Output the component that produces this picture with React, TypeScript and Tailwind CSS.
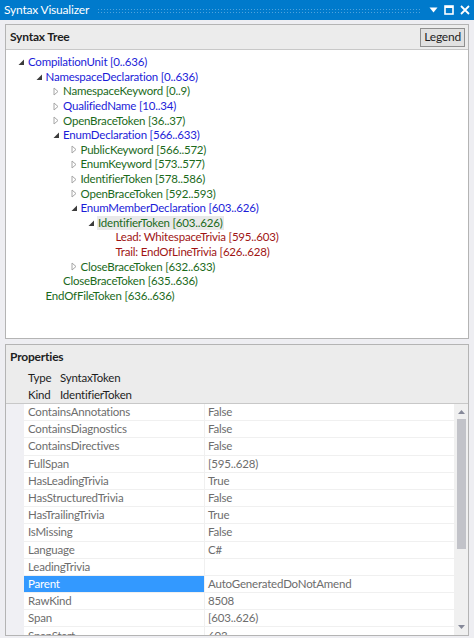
import React from 'react';

type Kind = 'node' | 'token' | 'trivia';
type Glyph = 'open' | 'closed' | 'none';

interface TreeItem {
  level: number;
  glyph: Glyph;
  text: string;
  kind: Kind;
  selected?: boolean;
}

const tree: TreeItem[] = [
  { level: 0, glyph: 'open', text: 'CompilationUnit [0..636)', kind: 'node' },
  { level: 1, glyph: 'open', text: 'NamespaceDeclaration [0..636)', kind: 'node' },
  { level: 2, glyph: 'closed', text: 'NamespaceKeyword [0..9)', kind: 'token' },
  { level: 2, glyph: 'closed', text: 'QualifiedName [10..34)', kind: 'node' },
  { level: 2, glyph: 'closed', text: 'OpenBraceToken [36..37)', kind: 'token' },
  { level: 2, glyph: 'open', text: 'EnumDeclaration [566..633)', kind: 'node' },
  { level: 3, glyph: 'closed', text: 'PublicKeyword [566..572)', kind: 'token' },
  { level: 3, glyph: 'closed', text: 'EnumKeyword [573..577)', kind: 'token' },
  { level: 3, glyph: 'closed', text: 'IdentifierToken [578..586)', kind: 'token' },
  { level: 3, glyph: 'closed', text: 'OpenBraceToken [592..593)', kind: 'token' },
  { level: 3, glyph: 'open', text: 'EnumMemberDeclaration [603..626)', kind: 'node' },
  { level: 4, glyph: 'open', text: 'IdentifierToken [603..626)', kind: 'token', selected: true },
  { level: 5, glyph: 'none', text: 'Lead: WhitespaceTrivia [595..603)', kind: 'trivia' },
  { level: 5, glyph: 'none', text: 'Trail: EndOfLineTrivia [626..628)', kind: 'trivia' },
  { level: 3, glyph: 'closed', text: 'CloseBraceToken [632..633)', kind: 'token' },
  { level: 2, glyph: 'none', text: 'CloseBraceToken [635..636)', kind: 'token' },
  { level: 1, glyph: 'none', text: 'EndOfFileToken [636..636)', kind: 'token' },
];

const indent = ['pl-[12px]', 'pl-[29.5px]', 'pl-[47px]', 'pl-[64.5px]', 'pl-[82px]', 'pl-[99.5px]'];

const kindColor: Record<Kind, string> = {
  node: 'text-[#1c1cd8]',
  token: 'text-[#1b6a1b]',
  trivia: 'text-[#a01414]',
};

const props: [string, string][] = [
  ['ContainsAnnotations', 'False'],
  ['ContainsDiagnostics', 'False'],
  ['ContainsDirectives', 'False'],
  ['FullSpan', '[595..628)'],
  ['HasLeadingTrivia', 'True'],
  ['HasStructuredTrivia', 'False'],
  ['HasTrailingTrivia', 'True'],
  ['IsMissing', 'False'],
  ['Language', 'C#'],
  ['LeadingTrivia', ''],
  ['Parent', 'AutoGeneratedDoNotAmend'],
  ['RawKind', '8508'],
  ['Span', '[603..626)'],
  ['SpanStart', '603'],
];

const Glyph: React.FC<{ glyph: Glyph }> = ({ glyph }) => {
  if (glyph === 'open') {
    return (
      <svg width="7" height="7" viewBox="0 0 7 7" className="mt-[1px]">
        <polygon points="6,0.5 6,6 0.5,6" fill="#3c3c3c" />
      </svg>
    );
  }
  if (glyph === 'closed') {
    return (
      <svg width="7" height="9" viewBox="0 0 7 9">
        <polygon points="1,1 5,4.5 1,8" fill="none" stroke="#a6a6a6" strokeWidth="1" />
      </svg>
    );
  }
  return null;
};

export default function App() {
  return (
    <div
      className="w-[474px] h-[638px] bg-[#eeeef2] flex flex-col overflow-hidden text-[11.5px] tracking-[-0.2px] leading-[14px]"
      style={{ fontFamily: 'Lato, "Noto Sans", sans-serif' }}
    >
      {/* title bar */}
      <div className="h-[20px] bg-[#007acc] flex items-center pl-[4px] pr-[4px] text-white shrink-0">
        <span className="leading-none text-[12px]">Syntax Visualizer</span>
        <div className="flex-1 h-[5px] mx-[8px] bg-[radial-gradient(circle,#4fa3dd_0.8px,transparent_1px)] bg-[length:3px_3px]" />
        <div className="flex items-center gap-[6px]">
          <svg width="9" height="6" viewBox="0 0 9 6">
            <polygon points="0.5,0.5 8.5,0.5 4.5,5.5" fill="white" />
          </svg>
          <svg width="10" height="10" viewBox="0 0 10 10">
            <rect x="1" y="1" width="8" height="8" fill="none" stroke="white" strokeWidth="1.6" />
            <rect x="1" y="1" width="8" height="2" fill="white" />
          </svg>
          <svg width="10" height="10" viewBox="0 0 10 10">
            <path d="M1 1 L9 9 M9 1 L1 9" stroke="white" strokeWidth="1.8" />
          </svg>
        </div>
      </div>

      <div className="flex-1 flex flex-col px-[5px] pt-[4px] pb-[2px] gap-[5px] min-h-0">
        {/* syntax tree panel */}
        <div className="h-[315px] shrink-0 border border-[#b4b4b4] bg-[#ececec] flex flex-col">
          <div className="h-[24px] flex items-center justify-between pl-[4px] pr-[3px] shrink-0">
            <span className="font-bold text-[12px] text-[#1e1e1e]">Syntax Tree</span>
            <button className="h-[19px] px-[3px] border border-[#8f8f8f] bg-[#e1e1e1] text-[12px] text-[#1e1e1e] leading-none">
              Legend
            </button>
          </div>
          <div className="flex-1 bg-white border-t border-[#c8c8c8] pt-[5px]">
            {tree.map((item, i) => (
              <div key={i} className={`h-[14.6px] flex items-center ${indent[item.level]}`}>
                <div className="w-[10px] flex items-center">
                  <Glyph glyph={item.glyph} />
                </div>
                <span
                  className={`leading-[14px] whitespace-nowrap ${kindColor[item.kind]} ${
                    item.selected ? 'bg-[#e9e9e9] pl-[1px] pr-[1px] -ml-[1px]' : ''
                  }`}
                >
                  {item.text}
                </span>
              </div>
            ))}
          </div>
        </div>

        {/* properties panel */}
        <div className="flex-1 min-h-0 border border-[#b4b4b4] bg-[#ececec] flex flex-col overflow-hidden">
          <div className="h-[24px] flex items-center pl-[4px] shrink-0">
            <span className="font-bold text-[12px] text-[#1e1e1e]">Properties</span>
          </div>
          <div className="h-[17px] flex items-center pl-[22px] text-[#1e1e1e] shrink-0">
            <span className="w-[32px]">Type</span>
            <span>SyntaxToken</span>
          </div>
          <div className="h-[17px] flex items-center pl-[22px] text-[#1e1e1e] shrink-0">
            <span className="w-[32px]">Kind</span>
            <span>IdentifierToken</span>
          </div>
          <div className="flex-1 min-h-0 flex border-t border-[#c8c8c8] bg-white overflow-hidden">
            <div className="w-[18px] bg-[#f0f0f4] shrink-0" />
            <div className="flex-1 min-w-0 overflow-hidden">
              {props.map(([name, value]) => {
                const sel = name === 'Parent';
                return (
                  <div key={name} className="h-[17.2px] flex border-b border-[#f0f0f0] text-[#6d6d6d]">
                    <div
                      className={`w-[181px] shrink-0 pl-[4px] flex items-center border-r border-[#f0f0f0] ${
                        sel ? 'bg-[#3399ff] text-white' : ''
                      }`}
                    >
                      {name}
                    </div>
                    <div className="flex-1 pl-[3px] flex items-center">{value}</div>
                  </div>
                );
              })}
            </div>
            <div className="w-[14px] bg-[#f0f0f0] shrink-0 flex flex-col items-center">
              <div className="h-[15px] flex items-center justify-center">
                <svg width="7" height="4" viewBox="0 0 7 4">
                  <polygon points="3.5,0 7,4 0,4" fill="#868999" />
                </svg>
              </div>
              <div className="w-[9px] h-[130px] bg-[#c2c3c9]" />
              <div className="flex-1" />
              <div className="h-[16px] flex items-center justify-center">
                <svg width="7" height="4" viewBox="0 0 7 4">
                  <polygon points="0,0 7,0 3.5,4" fill="#868999" />
                </svg>
              </div>
            </div>
          </div>
        </div>
      </div>
    </div>
  );
}
